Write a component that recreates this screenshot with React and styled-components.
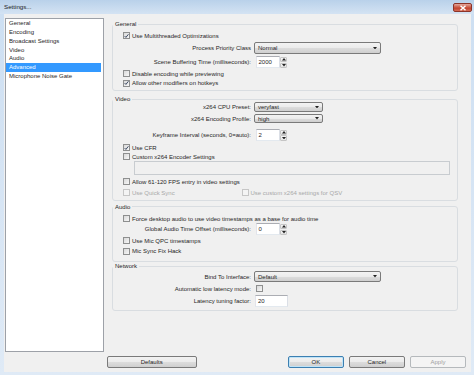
import React from 'react';
import styled, { createGlobalStyle } from 'styled-components';

const GlobalStyle = createGlobalStyle`
  html, body { margin: 0; padding: 0; background: #fff; }
  body { font-family: "Liberation Sans", Arial, sans-serif; }
  * { box-sizing: border-box; }
`;

const Window = styled.div`
  width: 474px;
  height: 375px;
  display: flex;
  flex-direction: column;
  background: linear-gradient(#cddff2, #dfeaf6);
  font-size: 6px;
  color: #262626;
  overflow: hidden;
`;

const TitleBar = styled.div`
  height: 14px;
  flex: none;
  display: flex;
  align-items: flex-start;
  justify-content: space-between;
  padding: 3px 2px 0 4px;
  background: linear-gradient(#b9d1ea, #d4e3f3);
`;

const Title = styled.span`
  font-size: 6.2px;
  line-height: 8px;
  color: #1a1a1a;
`;

const CloseButton = styled.div`
  width: 19px;
  height: 9px;
  display: flex;
  align-items: center;
  justify-content: center;
  border: 1px solid #8c3429;
  border-radius: 2px;
  background: linear-gradient(#e4a79c, #c9553f 50%, #c03b28 51%, #d46c55);
`;

const Client = styled.div`
  flex: 1;
  min-height: 0;
  margin: 0 3px 3px 4px;
  display: flex;
  flex-direction: column;
  background: #f0f0f0;
`;

const Main = styled.div`
  flex: 1;
  min-height: 0;
  display: flex;
  padding-top: 3.5px;
`;

const CategoryList = styled.ul`
  margin: 0 0 0 1px;
  width: 99px;
  padding: 0.4px 0 0;
  list-style: none;
  background: #fff;
  border: 1px solid #9da1a8;
`;

const Category = styled.li`
  height: 8.9px;
  line-height: 8.9px;
  margin-right: 2px;
  padding-left: 3px;
  white-space: nowrap;
  background: ${(p) => (p.$selected ? '#3399ff' : 'transparent')};
  color: ${(p) => (p.$selected ? '#fff' : '#262626')};
`;

const Panel = styled.div`
  margin-left: 8px;
  width: 346px;
  padding-top: 3.5px;
  display: flex;
  flex-direction: column;
`;

const GroupBox = styled.fieldset`
  margin: ${(p) => p.$mt || 0}px 0 0;
  padding: 0 0 ${(p) => p.$pb}px;
  min-width: 0;
  border: 1px solid #d9dde1;
  border-radius: 3px;
`;

const Legend = styled.legend`
  padding: 0 2px;
  line-height: 6px;
  font-size: 6px;
`;

const CheckRow = styled.div`
  display: flex;
  align-items: center;
  gap: 2px;
  height: 9px;
  margin-top: ${(p) => p.$mt || 0}px;
  padding-left: 10px;
  white-space: nowrap;
  color: ${(p) => (p.$disabled ? '#a8a8a8' : 'inherit')};
`;

const CheckPair = styled.div`
  display: grid;
  grid-template-columns: 118.5px auto;
  height: 9px;
  margin-top: ${(p) => p.$mt || 0}px;
  padding-left: 10px;
  & > div { padding-left: 0; margin-top: 0; }
`;

const Box = styled.span`
  flex: none;
  width: 7px;
  height: 7px;
  display: flex;
  align-items: center;
  justify-content: center;
  border: 1px solid ${(p) => (p.$disabled ? '#c6c6c6' : '#8e8f8f')};
  background: ${(p) =>
    p.$disabled ? '#f4f4f4' : 'linear-gradient(135deg, #d9d9d9, #f7f7f7)'};
  margin-left: ${(p) => p.$ml || 0}px;
`;

const FieldRow = styled.div`
  display: grid;
  grid-template-columns: 138px auto;
  column-gap: 3px;
  align-items: center;
  height: ${(p) => p.$h}px;
  margin-top: ${(p) => p.$mt || 0}px;
`;

const FieldLabel = styled.span`
  text-align: right;
  white-space: nowrap;
`;

const Select = styled.div`
  width: ${(p) => p.$w}px;
  height: ${(p) => p.$h}px;
  display: flex;
  align-items: center;
  justify-content: space-between;
  padding: 0 3px 0 3px;
  border: 1px solid #7a7a7a;
  border-radius: 2px;
  background: linear-gradient(#f3f3f3, #ebebeb 50%, #dddddd 51%, #cfcfcf);
`;

const Spin = styled.div`
  display: flex;
  margin-left: ${(p) => p.$ml || 0}px;
`;

const Input = styled.div`
  width: ${(p) => p.$w}px;
  height: ${(p) => p.$h}px;
  line-height: ${(p) => p.$h - 2}px;
  padding-left: 2px;
  background: #fff;
  border: 1px solid;
  border-color: #abadb3 #dbdfe6 #e3e9ef #e2e3ea;
`;

const SpinButtons = styled.div`
  width: 7px;
  display: flex;
  flex-direction: column;
  gap: 0.5px;
  padding: 0.5px 0;
`;

const SpinButton = styled.div`
  flex: 1;
  display: flex;
  align-items: center;
  justify-content: center;
  border: 1px solid #c5c5c5;
  border-radius: 1px;
  background: linear-gradient(#f6f6f6, #e4e4e4);
`;

const SettingsBox = styled.div`
  margin-left: 21px;
  width: 316px;
  height: 14px;
  border: 1px solid #c8ccd0;
  background: #f0f0f0;
`;

const Footer = styled.div`
  flex: none;
  display: flex;
  align-items: center;
  gap: 5.3px;
  padding: 4.5px 5px 4.5px 102.7px;
`;

const Spacer = styled.div`
  flex: 1;
`;

const Button = styled.div`
  width: ${(p) => p.$w}px;
  height: 11.5px;
  display: flex;
  align-items: center;
  justify-content: center;
  border: 1px solid ${(p) => (p.$default ? '#3c7fb1' : p.$disabled ? '#b5b9bc' : '#7a7a7a')};
  border-radius: 2px;
  color: ${(p) => (p.$disabled ? '#a0a0a0' : 'inherit')};
  background: ${(p) =>
    p.$disabled
      ? '#f4f4f4'
      : 'linear-gradient(#f2f2f2, #ebebeb 50%, #dddddd 51%, #cfcfcf)'};
  box-shadow: ${(p) => (p.$default ? 'inset 0 0 0 1px #bfe3f7' : 'none')};
`;

const Arrow = ({ up }) => (
  <svg width="4" height="2.5" viewBox="0 0 4 2.5">
    <polygon points={up ? '0,2.5 4,2.5 2,0' : '0,0 4,0 2,2.5'} fill="#222" />
  </svg>
);

const Check = ({ checked, disabled, ml, children }) => (
  <>
    <Box $disabled={disabled} $ml={ml}>
      {checked && (
        <svg width="6" height="6" viewBox="0 0 6 6">
          <path d="M0.8 3.1 L2.3 4.7 L5.3 0.9" fill="none" stroke="#2b3a55" strokeWidth="1.1" />
        </svg>
      )}
    </Box>
    <span>{children}</span>
  </>
);

const Dropdown = ({ w, h, value }) => (
  <Select $w={w} $h={h}>
    <span>{value}</span>
    <Arrow />
  </Select>
);

const SpinBox = ({ value }) => (
  <Spin $ml={1.5}>
    <Input $w={24.5} $h={12}>{value}</Input>
    <SpinButtons>
      <SpinButton><Arrow up /></SpinButton>
      <SpinButton><Arrow /></SpinButton>
    </SpinButtons>
  </Spin>
);

const categories = [
  'General',
  'Encoding',
  'Broadcast Settings',
  'Video',
  'Audio',
  'Advanced',
  'Microphone Noise Gate',
];

export default function App() {
  return (
    <Window>
      <GlobalStyle />
      <TitleBar>
        <Title>Settings...</Title>
        <CloseButton>
          <svg width="8" height="6" viewBox="0 0 8 6">
            <path d="M1.5 0.8 L6.5 5.2 M6.5 0.8 L1.5 5.2" stroke="#fff" strokeWidth="1.5" />
          </svg>
        </CloseButton>
      </TitleBar>
      <Client>
        <Main>
          <CategoryList>
            {categories.map((c) => (
              <Category key={c} $selected={c === 'Advanced'}>{c}</Category>
            ))}
          </CategoryList>
          <Panel>
            <GroupBox $pb={2}>
              <Legend>General</Legend>
              <CheckRow $mt={4.3}><Check checked>Use Multithreaded Optimizations</Check></CheckRow>
              <FieldRow $h={12} $mt={1.7}>
                <FieldLabel>Process Priority Class</FieldLabel>
                <Dropdown w={127} h={12} value="Normal" />
              </FieldRow>
              <FieldRow $h={12} $mt={2.5}>
                <FieldLabel>Scene Buffering Time (milliseconds):</FieldLabel>
                <SpinBox value="2000" />
              </FieldRow>
              <CheckRow $mt={0.7}><Check>Disable encoding while previewing</Check></CheckRow>
              <CheckRow $mt={0.6}><Check checked>Allow other modifiers on hotkeys</Check></CheckRow>
            </GroupBox>

            <GroupBox $mt={5.7} $pb={3}>
              <Legend>Video</Legend>
              <FieldRow $h={9.5}>
                <FieldLabel>x264 CPU Preset:</FieldLabel>
                <Dropdown w={69} h={9.5} value="veryfast" />
              </FieldRow>
              <FieldRow $h={9.5} $mt={2}>
                <FieldLabel>x264 Encoding Profile:</FieldLabel>
                <Dropdown w={69} h={9.5} value="high" />
              </FieldRow>
              <FieldRow $h={11.5} $mt={5.7}>
                <FieldLabel>Keyframe Interval (seconds, 0=auto):</FieldLabel>
                <SpinBox value="2" />
              </FieldRow>
              <CheckRow $mt={2.5}><Check checked>Use CFR</Check></CheckRow>
              <CheckRow><Check>Custom x264 Encoder Settings</Check></CheckRow>
              <SettingsBox />
              <CheckRow $mt={2}><Check>Allow 61-120 FPS entry in video settings</Check></CheckRow>
              <CheckPair $mt={2}>
                <CheckRow $disabled><Check disabled>Use Quick Sync</Check></CheckRow>
                <CheckRow $disabled><Check disabled>Use custom x264 settings for QSV</Check></CheckRow>
              </CheckPair>
            </GroupBox>

            <GroupBox $mt={2.5} $pb={5}>
              <Legend>Audio</Legend>
              <CheckRow $mt={4.8}>
                <Check>Force desktop audio to use video timestamps as a base for audio time</Check>
              </CheckRow>
              <FieldRow $h={12}>
                <FieldLabel>Global Audio Time Offset (milliseconds):</FieldLabel>
                <SpinBox value="0" />
              </FieldRow>
              <CheckRow $mt={1}><Check>Use Mic QPC timestamps</Check></CheckRow>
              <CheckRow $mt={1.3}><Check>Mic Sync Fix Hack</Check></CheckRow>
            </GroupBox>

            <GroupBox $mt={1.5} $pb={3}>
              <Legend>Network</Legend>
              <FieldRow $h={11} $mt={1.9}>
                <FieldLabel>Bind To Interface:</FieldLabel>
                <Dropdown w={127} h={11} value="Default" />
              </FieldRow>
              <FieldRow $h={9} $mt={2.3}>
                <FieldLabel>Automatic low latency mode:</FieldLabel>
                <Box $ml={2} />
              </FieldRow>
              <FieldRow $h={12} $mt={1.5}>
                <FieldLabel>Latency tuning factor:</FieldLabel>
                <Spin $ml={1}>
                  <Input $w={33} $h={12}>20</Input>
                </Spin>
              </FieldRow>
            </GroupBox>
          </Panel>
        </Main>
        <Footer>
          <Button $w={90}>Defaults</Button>
          <Spacer />
          <Button $w={55.7} $default>OK</Button>
          <Button $w={55.7}>Cancel</Button>
          <Button $w={56} $disabled>Apply</Button>
        </Footer>
      </Client>
    </Window>
  );
}
